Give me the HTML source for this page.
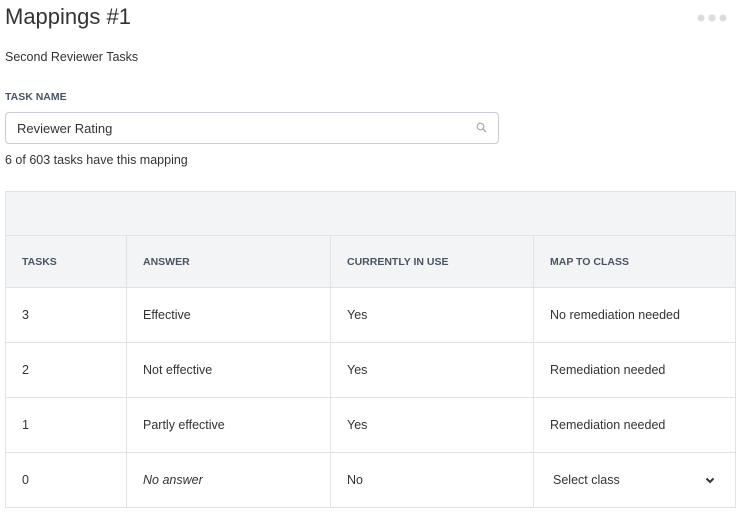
<!DOCTYPE html><html><head><style>
body{margin:0;background:#fff;font-family:"Liberation Sans",sans-serif;color:#333;width:742px;height:512px;overflow:hidden;position:relative}
.a{position:absolute;white-space:nowrap}
table{position:absolute;left:5px;top:191px;width:731px;border-collapse:collapse;font-size:12.5px;color:#333}
td,th{border:1px solid #dfe2e6;text-align:left;padding:0 0 0 16px}
th{background:#f3f4f6;font-size:10.5px;color:#4a5563;font-weight:bold;height:51px}
td{height:54px}
</style></head><body>
<div class="a" style="left:5px;top:4px;font-size:22px;color:#333">Mappings #1</div>
<svg class="a" style="left:696px;top:14px" width="34" height="8"><circle cx="5" cy="4" r="3.6" fill="#ddd"/><circle cx="16" cy="4" r="3.6" fill="#ddd"/><circle cx="27" cy="4" r="3.6" fill="#ddd"/></svg>
<div class="a" style="left:5px;top:50px;font-size:12.5px">Second Reviewer Tasks</div>
<div class="a" style="left:5px;top:91px;font-size:10.5px;font-weight:bold;color:#4a5563">TASK NAME</div>
<div class="a" style="left:5px;top:112px;width:492px;height:30px;border:1px solid #c9ced6;border-radius:4px"></div>
<div class="a" style="left:17px;top:121px;font-size:13px">Reviewer Rating</div>
<svg class="a" style="left:476px;top:122px" width="11" height="11"><circle cx="4.5" cy="4.5" r="3.3" stroke="#aaa" stroke-width="1.2" fill="none"/><line x1="7" y1="7" x2="10" y2="10" stroke="#aaa" stroke-width="1.3"/></svg>
<div class="a" style="left:5px;top:153px;font-size:12.5px">6 of 603 tasks have this mapping</div>
<table>
<tr><th colspan="4" style="height:43px"></th></tr>
<tr><th style="width:104px">TASKS</th><th style="width:187px">ANSWER</th><th style="width:186px">CURRENTLY IN USE</th><th>MAP TO CLASS</th></tr>
<tr><td>3</td><td>Effective</td><td>Yes</td><td>No remediation needed</td></tr>
<tr><td>2</td><td>Not effective</td><td>Yes</td><td>Remediation needed</td></tr>
<tr><td>1</td><td>Partly effective</td><td>Yes</td><td>Remediation needed</td></tr>
<tr><td>0</td><td><i>No answer</i></td><td>No</td><td style="padding-left:19px;position:relative">Select class<svg style="position:absolute;right:20px;top:24px" width="10" height="7"><path d="M1.5 1.5L5 5L8.5 1.5" stroke="#333" stroke-width="2" fill="none"/></svg></td></tr>
</table>
</body></html>
